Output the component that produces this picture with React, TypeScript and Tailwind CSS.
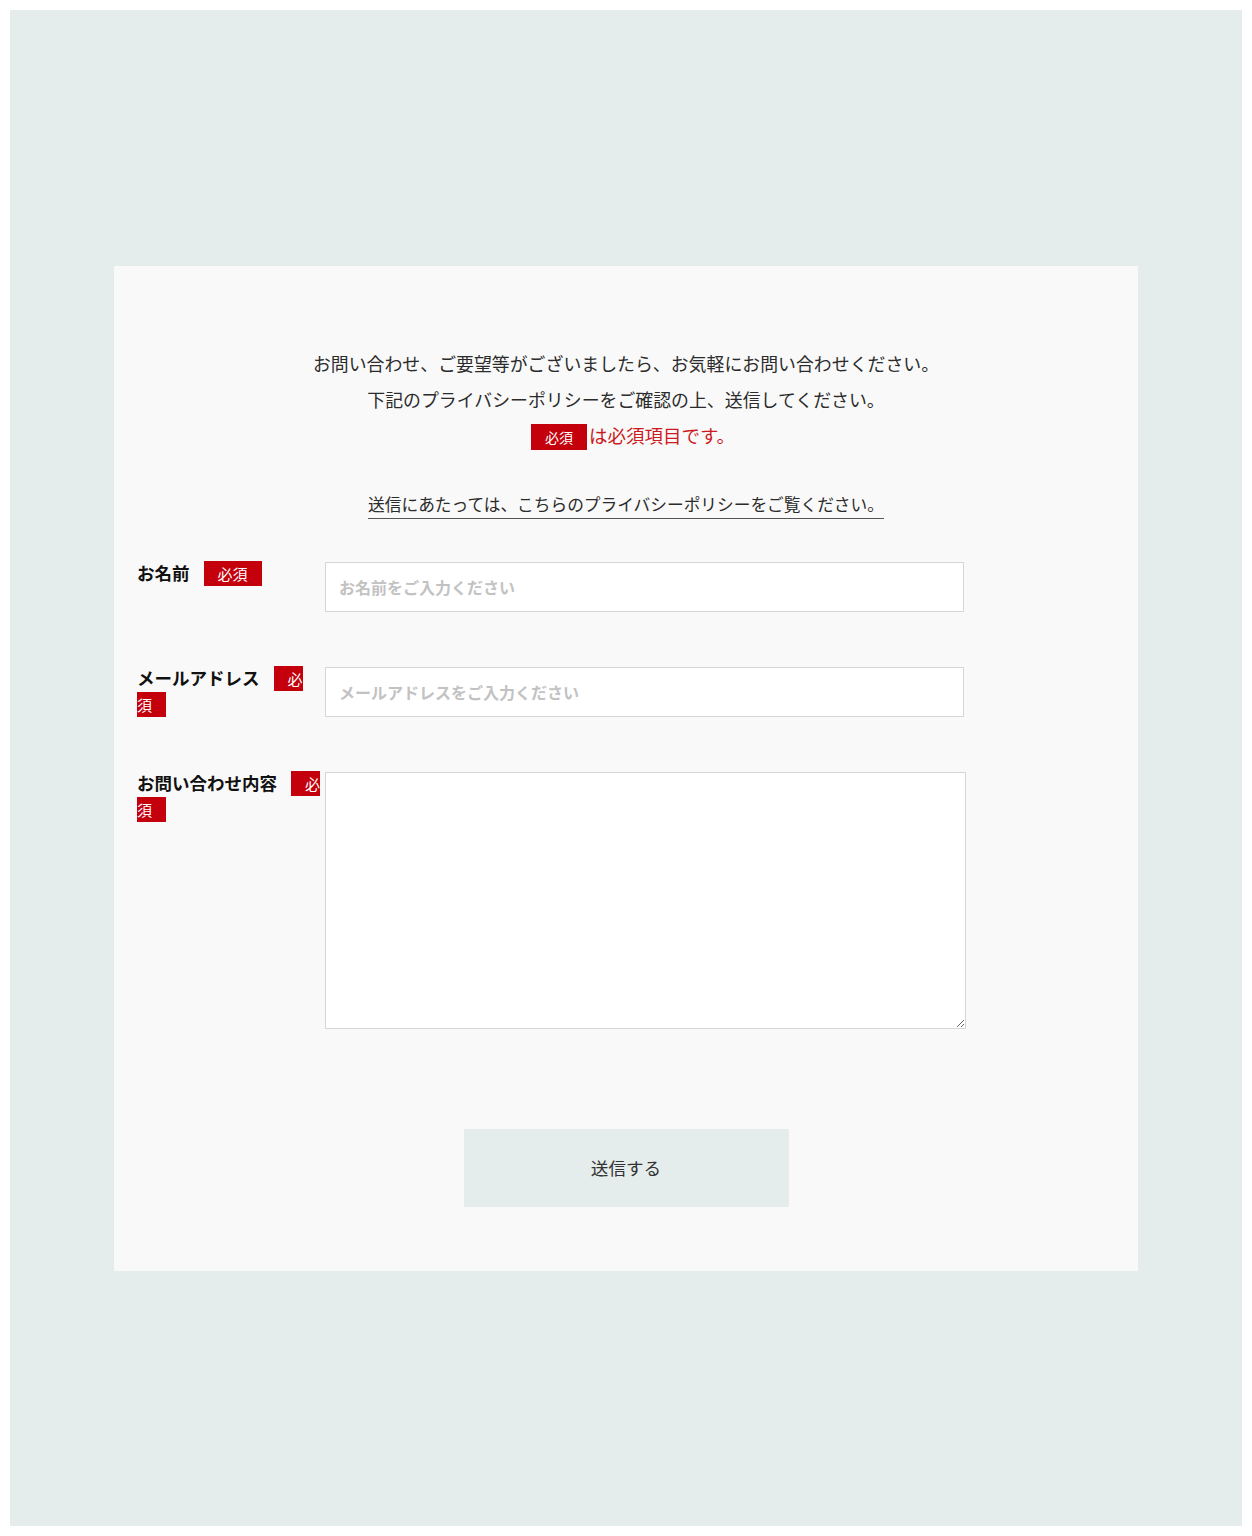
import React from "react";

const font = { fontFamily: '"Noto Sans CJK JP", "Noto Sans", sans-serif' };

function Badge({ children }: { children: React.ReactNode }) {
  return (
    <span className="ml-[14px] bg-[#c4000c] px-[14px] py-[2px] text-[15px] font-normal leading-none text-white">
      {children}
    </span>
  );
}

export default function App() {
  return (
    <div className="bg-white p-[10px] text-[#333]" style={font}>
      <div className="bg-[#e4ecec] px-[104px] pt-[256px] pb-[255px]">
        <div className="bg-[#f9f9f9] px-[23px] pt-[79px] pb-[64px]">
          <div className="text-center text-[17.9px] leading-[36px] text-[#2b2b2b]">
            <p>お問い合わせ、ご要望等がございましたら、お気軽にお問い合わせください。</p>
            <p>下記のプライバシーポリシーをご確認の上、送信してください。</p>
            <p className="pl-[14px] text-[#cc1a22]">
              <span className="bg-[#c4000c] px-[14px] py-[3px] text-[14px] leading-none text-white">必須</span>
              <span className="ml-[2px] text-[18.5px]">は必須項目です。</span>
            </p>
          </div>
          <div className="mt-[39px] text-center">
            <span className="inline-block border-b border-[#555] pb-[2px] text-[16.7px] leading-[24px] text-[#2b2b2b]">
              送信にあたっては、こちらのプライバシーポリシーをご覧ください。
            </span>
          </div>
          <div className="mt-[41px] flex flex-col gap-[53px]">
            <div className="flex items-start">
              <div className="mr-[2px] w-[186px] text-[17.5px] font-bold leading-[26px] text-[#111]">
                お名前<Badge>必須</Badge>
              </div>
              <input
                className="mt-[2px] h-[50px] w-[639px] border border-[#d6d6d6] bg-white px-[13px] text-[16px] outline-none placeholder:font-bold placeholder:text-[#c2c2c2]"
                placeholder="お名前をご入力ください"
              />
            </div>
            <div className="flex items-start">
              <div className="mr-[2px] w-[186px] text-[17.5px] font-bold leading-[26px] text-[#111]">
                メールアドレス<Badge>必須</Badge>
              </div>
              <input
                className="mt-[2px] h-[50px] w-[639px] border border-[#d6d6d6] bg-white px-[13px] text-[16px] outline-none placeholder:font-bold placeholder:text-[#c2c2c2]"
                placeholder="メールアドレスをご入力ください"
              />
            </div>
            <div className="flex items-start">
              <div className="mr-[2px] w-[186px] text-[17.5px] font-bold leading-[26px] text-[#111]">
                お問い合わせ内容<Badge>必須</Badge>
              </div>
              <textarea className="mt-[2px] h-[257px] w-[641px] border border-[#d6d6d6] bg-white px-[13px] py-[10px] text-[16px] outline-none" />
            </div>
          </div>
          <div className="mt-[100px] flex justify-center">
            <button className="h-[78px] w-[325px] bg-[#e4ecec] text-[17.6px] text-[#333]">
              送信する
            </button>
          </div>
        </div>
      </div>
    </div>
  );
}
